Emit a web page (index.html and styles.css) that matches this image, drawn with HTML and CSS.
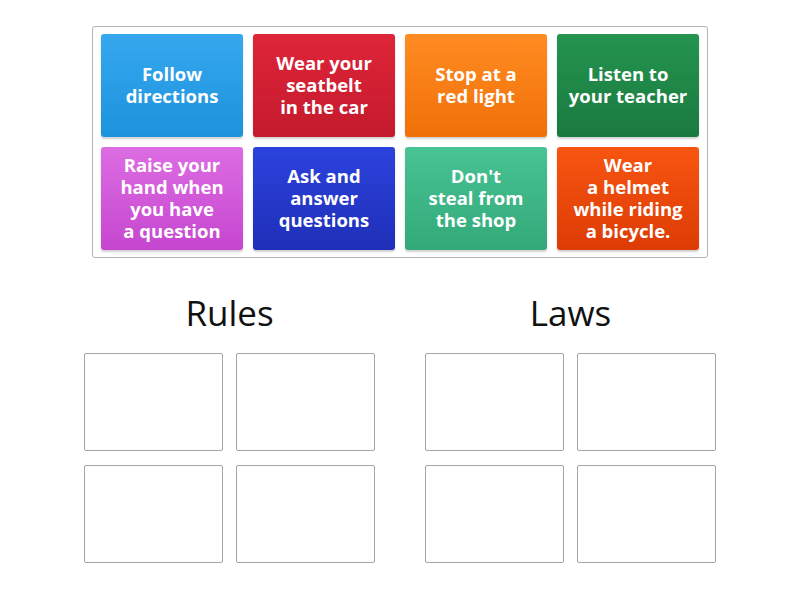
FILE: index.html
```html
<!DOCTYPE html>
<html lang="en">
<head>
    <meta charset="UTF-8">
    <meta name="viewport" content="width=device-width, initial-scale=1.0">
    <title>Rules and Laws | Group sort</title>
    <link rel="stylesheet" href="styles.css">
</head>
<body>
    <div class="page">
        <div class="pool">
            <div class="tile blue">Follow<br>directions</div>
            <div class="tile red">Wear your<br>seatbelt<br>in the car</div>
            <div class="tile orange">Stop at a<br>red light</div>
            <div class="tile green">Listen to<br>your teacher</div>
            <div class="tile purple">Raise your<br>hand when<br>you have<br>a question</div>
            <div class="tile navy">Ask and<br>answer<br>questions</div>
            <div class="tile mint">Don't<br>steal from<br>the shop</div>
            <div class="tile flame">Wear<br>a helmet<br>while riding<br>a bicycle.</div>
        </div>
        <div class="groups">
            <div class="group">
                <div class="group-title">Rules</div>
                <div class="slots">
                    <div class="slot"></div><div class="slot"></div>
                    <div class="slot"></div><div class="slot"></div>
                </div>
            </div>
            <div class="group">
                <div class="group-title">Laws</div>
                <div class="slots">
                    <div class="slot"></div><div class="slot"></div>
                    <div class="slot"></div><div class="slot"></div>
                </div>
            </div>
        </div>
    </div>
</body>
</html>
```

FILE: styles.css
```css
html,body{margin:0;padding:0;background:#fff;}
body{font-family:"Open Sans","Liberation Sans",sans-serif;color:#111;}
.page{display:flex;flex-direction:column;align-items:center;padding-top:26px;}

.pool{
    display:grid;
    grid-template-columns:repeat(4,142px);
    grid-auto-rows:103px;
    gap:10px;
    padding:7px 8px;
    border:1px solid #b4b4b4;
    border-radius:3px;
}
.tile{
    display:flex;
    align-items:center;
    justify-content:center;
    text-align:center;
    padding:0 4px 2px;
    color:#fff;
    font-weight:700;
    font-size:18.5px;
    line-height:22px;
    border-radius:3px;
    box-shadow:0 2px 2px rgba(0,0,0,0.18);
}
.blue{background:linear-gradient(#35a8ee,#1d93dd);}
.red{background:linear-gradient(#df2539,#c41a2d);}
.orange{background:linear-gradient(#ff8c22,#f07008);}
.green{background:linear-gradient(#249450,#1a7a3e);}
.purple{background:linear-gradient(#dc6de2,#c646d0);}
.navy{background:linear-gradient(#2b42dc,#1f2fb8);}
.mint{background:linear-gradient(#48c394,#33a979);}
.flame{background:linear-gradient(#f85512,#dc3c04);}

.groups{display:flex;gap:50px;margin-top:34px;}
.group{display:flex;flex-direction:column;align-items:center;}
.group-title{font-size:35px;line-height:42px;font-weight:400;margin-bottom:19px;}
.slots{
    display:grid;
    grid-template-columns:repeat(2,139px);
    grid-auto-rows:98px;
    column-gap:13px;
    row-gap:14px;
}
.slot{
    box-sizing:border-box;
    border:1px solid #a4a4a4;
    border-radius:2px;
    background:#fff;
}
```
